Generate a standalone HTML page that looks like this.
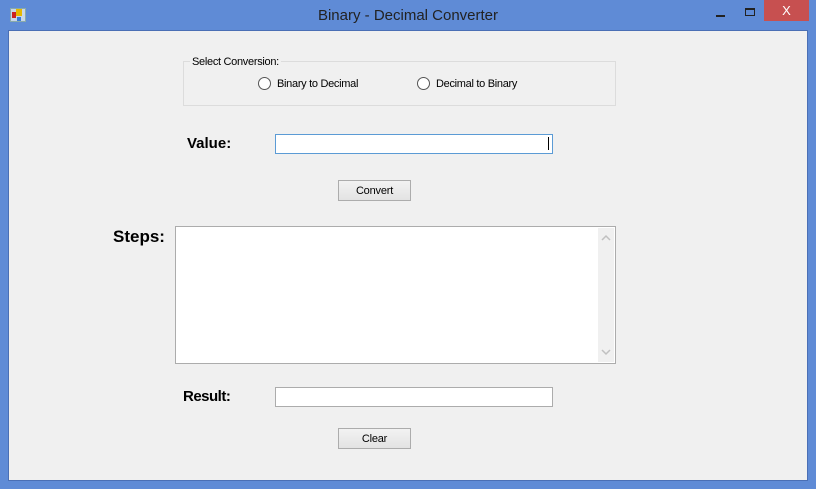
<!DOCTYPE html>
<html><head><style>
*{margin:0;padding:0;box-sizing:border-box}
body{width:816px;height:489px;background:#5f8bd6;position:relative;overflow:hidden;font-family:"Liberation Sans",sans-serif;}
.abs{position:absolute}
.client{left:8px;top:30px;width:800px;height:451px;background:#f0f0f0;border:1px solid #4a6fb5}
.t{font-size:11px;color:#000;letter-spacing:-0.3px}
.btn{background:linear-gradient(#f2f2f2,#e3e3e3);border:1px solid #acacac;font-size:11px;text-align:center;line-height:20px;letter-spacing:-0.2px}
.box{background:#fff;border:1px solid #acacac}
.radio{width:13px;height:13px;border:1px solid #555;border-radius:50%;background:#fff}
</style></head><body>
<div class="abs" style="left:10px;top:8px;width:16px;height:14px">
<div class="abs" style="left:0;top:0;width:16px;height:14px;background:#c9d6e8;border:1px solid #8aa"></div>
<div class="abs" style="left:2px;top:4px;width:4px;height:6px;background:#c22"></div>
<div class="abs" style="left:6px;top:1px;width:6px;height:7px;background:#e6b800"></div>
<div class="abs" style="left:7px;top:9px;width:4px;height:4px;background:#3a7bd5"></div>
</div>
<div class="abs" style="left:0;width:816px;top:7px;text-align:center;font-size:15px;color:#222">Binary - Decimal Converter</div>
<div class="abs" style="left:716px;top:15px;width:9px;height:2px;background:#222"></div>
<div class="abs" style="left:745px;top:8px;width:10px;height:8px;border:1px solid #222;border-top-width:2px"></div>
<div class="abs" style="left:764px;top:0;width:45px;height:21px;background:#c75050;color:#fff;text-align:center;font-size:13px;line-height:22px">X</div>
<div class="abs client"></div>
<div class="abs" style="left:183px;top:61px;width:433px;height:45px;border:1px solid #dcdcdc"></div>
<div class="abs t" style="left:190px;top:56px;background:#f0f0f0;padding:0 2px">Select Conversion:</div>
<div class="abs radio" style="left:258px;top:77px"></div>
<div class="abs t" style="left:277px;top:78px">Binary to Decimal</div>
<div class="abs radio" style="left:417px;top:77px"></div>
<div class="abs t" style="left:436px;top:78px">Decimal to Binary</div>
<div class="abs" style="left:187px;top:135px;font-size:15px;font-weight:bold">Value:</div>
<div class="abs box" style="left:275px;top:134px;width:278px;height:20px;border-color:#5b9bd5"></div>
<div class="abs" style="left:548px;top:137px;width:1px;height:13px;background:#000"></div>
<div class="abs btn" style="left:338px;top:180px;width:73px;height:21px">Convert</div>
<div class="abs" style="left:113px;top:227px;font-size:17px;font-weight:bold">Steps:</div>
<div class="abs box" style="left:175px;top:226px;width:441px;height:138px"></div>
<div class="abs" style="left:598px;top:228px;width:16px;height:134px;background:#f0f0f0"></div>
<svg class="abs" style="left:598px;top:228px" width="16" height="134"><path d="M4 12 L8 8 L12 12" stroke="#c0c0c0" stroke-width="1.5" fill="none"/><path d="M4 122 L8 126 L12 122" stroke="#c0c0c0" stroke-width="1.5" fill="none"/></svg>
<div class="abs" style="left:183px;top:388px;font-size:15px;font-weight:bold;letter-spacing:-0.5px">Result:</div>
<div class="abs box" style="left:275px;top:387px;width:278px;height:20px"></div>
<div class="abs btn" style="left:338px;top:428px;width:73px;height:21px">Clear</div>
</body></html>
